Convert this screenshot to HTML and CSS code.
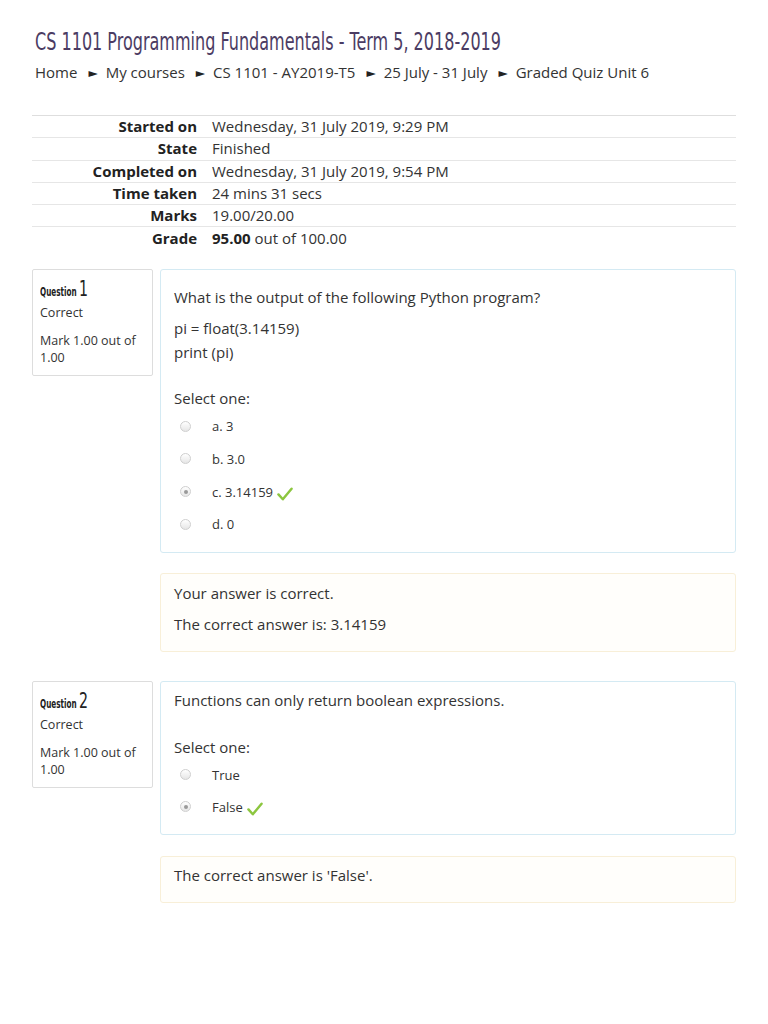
FILE: index.html
```html
<!DOCTYPE html>
<html lang="en">
<head>
<meta charset="utf-8">
<title>Graded Quiz Unit 6</title>
<link rel="stylesheet" href="styles.css">
</head>
<body>
<div class="page">
  <header class="page-header">
    <h1 class="course-title">CS 1101 Programming Fundamentals - Term 5, 2018-2019</h1>
    <nav class="breadcrumb">
      <span>Home</span><span class="sep">►</span><span>My courses</span><span class="sep">►</span><span>CS 1101 - AY2019-T5</span><span class="sep">►</span><span>25 July - 31 July</span><span class="sep">►</span><span>Graded Quiz Unit 6</span>
    </nav>
  </header>

  <table class="summary">
    <tr><th>Started on</th><td>Wednesday, 31 July 2019, 9:29 PM</td></tr>
    <tr><th>State</th><td>Finished</td></tr>
    <tr><th>Completed on</th><td>Wednesday, 31 July 2019, 9:54 PM</td></tr>
    <tr><th>Time taken</th><td>24 mins 31 secs</td></tr>
    <tr><th>Marks</th><td>19.00/20.00</td></tr>
    <tr><th>Grade</th><td><b>95.00</b> out of 100.00</td></tr>
  </table>

  <section class="que">
    <div class="info">
      <div class="qno"><span class="qlabel">Question</span><span class="qnum">1</span></div>
      <div class="state">Correct</div>
      <div class="grade">Mark 1.00 out of 1.00</div>
    </div>
    <div class="qmain">
      <div class="formulation">
        <div class="qtext qtext-first">What is the output of the following Python program?</div>
        <div class="code">pi = float(3.14159)<br>print (pi)</div>
        <div class="prompt">Select one:</div>
        <div class="answers">
          <div class="opt"><span class="radio"></span><span class="opt-label">a. 3</span></div>
          <div class="opt"><span class="radio"></span><span class="opt-label">b. 3.0</span></div>
          <div class="opt"><span class="radio checked"></span><span class="opt-label">c. 3.14159</span><svg class="tick" viewBox="0 0 18 16" width="16" height="14"><path d="M1.5 8.5 L6.5 14 L16.5 2" fill="none" stroke="#8cc63f" stroke-width="2.8" stroke-linecap="round" stroke-linejoin="round"/></svg></div>
          <div class="opt"><span class="radio"></span><span class="opt-label">d. 0</span></div>
        </div>
      </div>
      <div class="feedback">
        <div class="fb-line">Your answer is correct.</div>
        <div class="fb-line fb-next">The correct answer is: 3.14159</div>
      </div>
    </div>
  </section>

  <section class="que que-second">
    <div class="info">
      <div class="qno"><span class="qlabel">Question</span><span class="qnum">2</span></div>
      <div class="state">Correct</div>
      <div class="grade">Mark 1.00 out of 1.00</div>
    </div>
    <div class="qmain">
      <div class="formulation">
        <div class="qtext">Functions can only return boolean expressions.</div>
        <div class="prompt prompt-wide">Select one:</div>
        <div class="answers">
          <div class="opt opt-tight"><span class="radio"></span><span class="opt-label">True</span></div>
          <div class="opt opt-tight"><span class="radio checked"></span><span class="opt-label">False</span><svg class="tick" viewBox="0 0 18 16" width="16" height="14"><path d="M1.5 8.5 L6.5 14 L16.5 2" fill="none" stroke="#8cc63f" stroke-width="2.8" stroke-linecap="round" stroke-linejoin="round"/></svg></div>
        </div>
      </div>
      <div class="feedback feedback-single">
        <div class="fb-line">The correct answer is 'False'.</div>
      </div>
    </div>
  </section>
</div>
</body>
</html>
```

FILE: styles.css
```css
html, body {
  margin: 0;
  padding: 0;
  background: #ffffff;
}

body {
  font-family: "Open Sans", "Noto Sans", "DejaVu Sans", sans-serif;
  color: #333333;
  font-size: 15px;
}

.page {
  width: 704px;
  padding: 0 32px;
}

.page-header {
  padding: 27px 0 0 3px;
}

.course-title {
  margin: 0;
  font-family: "DejaVu Sans Condensed", "DejaVu Sans", sans-serif;
  font-stretch: condensed;
  font-weight: normal;
  font-size: 25px;
  line-height: 30px;
  color: #4b3c63;
  white-space: nowrap;
  transform: scaleX(0.713);
  transform-origin: left center;
}

.breadcrumb {
  margin-top: 4px;
  font-size: 15px;
  line-height: 22px;
  color: #333;
  white-space: nowrap;
}

.breadcrumb .sep {
  font-size: 12px;
  margin: 0 8px 0 11px;
  color: #222;
  position: relative;
  top: -1px;
}

.summary {
  margin-top: 30px;
  width: 704px;
  border-collapse: collapse;
  border-top: 1px solid #dedede;
}

.summary th,
.summary td {
  padding: 0;
  height: 21.3px;
  line-height: 21px;
  font-size: 15px;
  vertical-align: middle;
  border-bottom: 1px solid #e6e6e6;
}

.summary tr:last-child th,
.summary tr:last-child td {
  border-bottom: none;
}

.summary th {
  width: 165px;
  text-align: right;
  font-weight: 700;
  color: #222;
  padding-right: 15px;
}

.summary td {
  text-align: left;
  color: #333;
}

.summary td b {
  font-weight: 700;
  color: #222;
}

.que {
  display: flex;
  gap: 7px;
  align-items: flex-start;
  margin-top: 20px;
}

.que-second {
  margin-top: 29px;
}

.info {
  flex: none;
  border: 1px solid #dddddd;
  border-radius: 2px;
  padding: 7px 6px 9px 7px;
  box-sizing: border-box;
  width: 121px;
  font-size: 12.5px;
  line-height: 17px;
  color: #333;
}

.qno {
  line-height: 24px;
  height: 24px;
  white-space: nowrap;
  display: flex;
  align-items: baseline;
}

.qlabel {
  display: inline-block;
  font-family: "DejaVu Sans Condensed", "DejaVu Sans", sans-serif;
  font-stretch: condensed;
  font-size: 13px;
  font-weight: 700;
  color: #222;
  transform: scaleX(0.62);
  transform-origin: left center;
  margin-right: -20px;
}

.qnum {
  display: inline-block;
  font-family: "DejaVu Sans Condensed", "DejaVu Sans", sans-serif;
  font-stretch: condensed;
  font-size: 21px;
  color: #222;
  transform: scaleX(0.75);
  transform-origin: left center;
}

.state {
  margin-top: 3px;
}

.grade {
  margin-top: 11px;
}

.qmain {
  flex: 1;
  min-width: 0;
}

.formulation {
  border: 1px solid #d4eaf3;
  border-radius: 3px;
  padding: 7px 13px 11px 13px;
  background: #ffffff;
}

.qtext {
  line-height: 22px;
}

.qtext-first {
  margin-top: 9px;
}

.code {
  margin-top: 8px;
  line-height: 24px;
}

.prompt {
  margin-top: 23px;
  line-height: 22px;
}

.prompt-wide {
  margin-top: 25px;
}

.answers {
  margin-top: 1px;
}

.opt {
  display: flex;
  align-items: center;
  height: 32.7px;
  font-size: 13px;
  color: #333;
}

.opt-tight {
  height: 32px;
}

.radio {
  width: 11px;
  height: 11px;
  box-sizing: border-box;
  border-radius: 50%;
  border: 1px solid #cfcfcf;
  background: linear-gradient(#ffffff, #e6e6e6);
  margin-left: 6px;
  margin-right: 21px;
  position: relative;
  flex: none;
}

.radio.checked::after {
  content: "";
  position: absolute;
  left: 2.5px;
  top: 2.5px;
  width: 4px;
  height: 4px;
  border-radius: 50%;
  background: #9a9a9a;
}

.opt-label {
  line-height: 18px;
}

.tick {
  margin-left: 4px;
  margin-top: 4px;
}

.feedback {
  margin-top: 20px;
  border: 1px solid #f8efd8;
  border-radius: 3px;
  background: #fffefb;
  padding: 8px 13px 16px 13px;
}

.feedback-single {
  margin-top: 21px;
  padding-top: 7px;
}

.fb-line {
  line-height: 22px;
}

.fb-next {
  margin-top: 9px;
}
```
